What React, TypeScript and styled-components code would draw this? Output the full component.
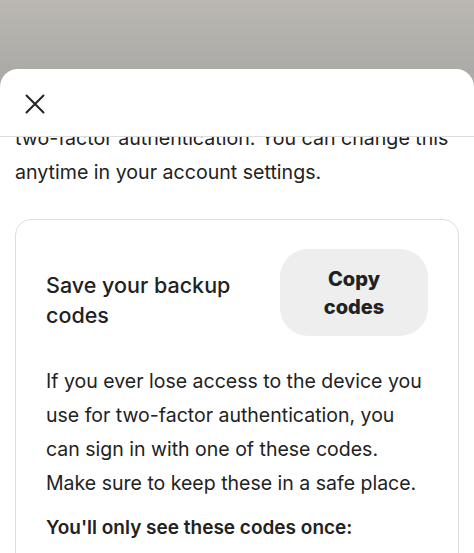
import React from "react";
import styled, { createGlobalStyle } from "styled-components";

const GlobalStyle = createGlobalStyle`
  html, body {
    margin: 0;
    padding: 0;
    background: #adaba7;
  }
  body {
    font-family: Inter, "Noto Sans", sans-serif;
    color: #222222;
    -webkit-font-smoothing: antialiased;
  }
`;

const Page = styled.div`
  display: flex;
  flex-direction: column;
  height: 553px;
  overflow: hidden;
`;

const Backdrop = styled.div`
  flex: 0 0 69px;
  background: linear-gradient(#bbb8b3, #adaba7);
`;

const Sheet = styled.div`
  flex: 1;
  display: flex;
  flex-direction: column;
  background: #ffffff;
  border-radius: 18px 18px 0 0;
  overflow: hidden;
`;

const Header = styled.div`
  flex: 0 0 67px;
  display: flex;
  align-items: center;
  padding: 0 24px;
  border-bottom: 1px solid #dcdcdc;
`;

const CloseButton = styled.button`
  display: flex;
  align-items: center;
  justify-content: center;
  width: 22px;
  height: 22px;
  padding: 0;
  margin-top: 2px;
  border: none;
  background: none;
  color: #222222;
  cursor: pointer;
`;

const Scroll = styled.div`
  flex: 1;
  overflow: hidden;
`;

const Content = styled.div`
  margin-top: -16px;
  padding: 0 15px;
`;

const Intro = styled.p`
  margin: 0;
  font-size: 19.6px;
  line-height: 34px;
`;

const Card = styled.section`
  margin-top: 30px;
  padding: 29px 30px 40px;
  border: 1px solid #dedede;
  border-radius: 16px;
`;

const CardHead = styled.div`
  display: flex;
  align-items: center;
  justify-content: space-between;
  gap: 16px;
`;

const Title = styled.h2`
  margin: 15px 0 0;
  font-size: 21.5px;
  font-weight: 500;
  line-height: 30px;
  max-width: 210px;
`;

const CopyButton = styled.button`
  flex: 0 0 148px;
  height: 87px;
  padding: 0 30px;
  border: none;
  border-radius: 28px;
  background: #eeeeee;
  color: #222222;
  font-family: inherit;
  font-size: 20px;
  font-weight: 800;
  line-height: 28px;
  cursor: pointer;
`;

const Body = styled.p<{ $bold?: boolean }>`
  margin: ${(p) => (p.$bold ? "11px 0 0" : "28px 0 0")};
  font-size: ${(p) => (p.$bold ? "19px" : "19.5px")};
  font-weight: ${(p) => (p.$bold ? 600 : 400)};
  line-height: 34px;
`;

const CodeList = styled.ul`
  margin: 16px 0 0;
  padding: 0;
  list-style: none;
  font-family: "Liberation Mono", monospace;
  font-size: 18px;
  line-height: 32px;
`;

const CloseIcon = () => (
  <svg width="20" height="20" viewBox="0 0 20 20" fill="none">
    <path
      d="M1.5 1.5 L18.5 18.5 M18.5 1.5 L1.5 18.5"
      stroke="currentColor"
      strokeWidth="2"
      strokeLinecap="round"
    />
  </svg>
);

export default function App() {
  return (
    <>
      <GlobalStyle />
      <Page>
        <Backdrop />
        <Sheet>
          <Header>
            <CloseButton aria-label="Close">
              <CloseIcon />
            </CloseButton>
          </Header>
          <Scroll>
            <Content>
              <Intro>
                two-factor authentication. You can change this anytime in your
                account settings.
              </Intro>
              <Card>
                <CardHead>
                  <Title>Save your backup codes</Title>
                  <CopyButton>Copy codes</CopyButton>
                </CardHead>
                <Body>
                  If you ever lose access to the device you use for two-factor
                  authentication, you can sign in with one of these codes. Make
                  sure to keep these in a safe place.
                </Body>
                <Body $bold>You'll only see these codes once:</Body>
                <CodeList>
                  <li>&nbsp;</li>
                  <li>&nbsp;</li>
                </CodeList>
              </Card>
            </Content>
          </Scroll>
        </Sheet>
      </Page>
    </>
  );
}
